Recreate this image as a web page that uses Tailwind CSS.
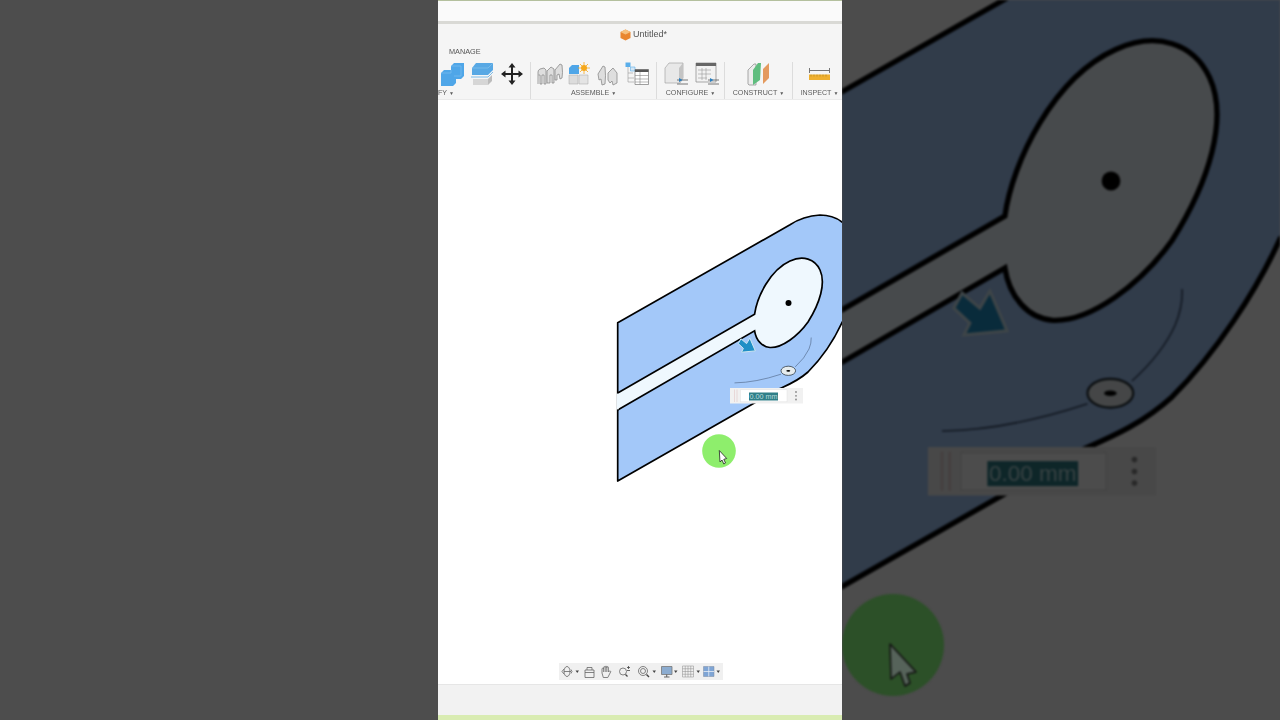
<!DOCTYPE html>
<html lang="en">
<head>
  <meta charset="UTF-8">
  <script src="https://cdn.jsdelivr.net/npm/@tailwindcss/browser@4"></script>
  <title>Untitled</title>
</head>
<body class="w-[1280px] h-[720px] overflow-hidden bg-[#4d4d4d] font-['Liberation_Sans',Arial,sans-serif]">
  <div class="flex h-[720px]">
    <!-- left side of the blurred video frame -->
    <div class="w-[438px] bg-[#4d4d4d]"></div>

    <!-- app window -->
    <div class="w-[404px] flex flex-col bg-white overflow-hidden">
      <div class="h-[1px] bg-[#b4c09e]"></div>
      <div class="h-[20px] bg-[#fafafa]"></div>
      <div class="h-[3px] bg-[#d9d9d5]"></div>

      <!-- toolbar -->
      <div class="h-[76px] bg-[#f5f5f5] border-b border-[#ebebeb] blur-[0.4px]">
        <div class="h-[20px] pt-[2px] pl-[7px] flex items-center justify-center gap-[2px] text-[9px] text-[#555]">
          <svg width="11" height="12" viewBox="0 0 11 12"><path d="M5.5 0.5 10.5 3v6l-5 2.5L0.5 9V3z" fill="#e9862f"/><path d="M5.5 0.5 10.5 3l-5 2.5L0.5 3z" fill="#f6c07e"/></svg>
          <span>Untitled*</span>
        </div>
        <div class="h-[14px] pt-[2px] pl-[11px] flex items-center text-[7.3px] text-[#555]">MANAGE</div>
        <div class="flex h-[37px] mt-[4px] text-[7.1px] text-[#5c5c5c]">
          <!-- modify (cut off) -->
          <div class="w-[93px] border-r border-[#dcdcdc] flex flex-col justify-between">
            <div class="flex items-center h-[24px] gap-[7px] pl-[2px]">
              <svg width="24" height="24" viewBox="0 0 24 24"><path d="M1 11l3-3h7V4l3-3h10v13l-3 3h-5v4l-3 3H1z" fill="#4fa6e8"/><path d="M11 8v3H1M14 14h7V4H11" fill="none" stroke="#85c4f0" stroke-width="0.6"/></svg>
              <svg width="23" height="24" viewBox="0 0 23 24"><path d="M1 6l4-5h17v7l-5 5H1z" fill="#58a8e4"/><path d="M1 6h16l5-5" fill="none" stroke="#8cc6ef" stroke-width="0.6"/><path d="M0 15h17l5-5" fill="none" stroke="#7dbbe8" stroke-width="1"/><path d="M2 17h15v6H2z" fill="#d6d6d6"/><path d="M17 17l4-4v6l-4 4z" fill="#bcbcbc"/></svg>
              <svg width="22" height="22" viewBox="0 0 22 22" fill="#222"><path d="M11 0l3.500 4.500H12V10h5.500V7.500L22 11l-4.500 3.500V12H12v5.500h2.500L11 22l-3.500-4.500H10V12H4.500v2.500L0 11l4.500-3.500V10H10V4.500H7.500z"/></svg>
            </div>
            <div class="h-[12px] pt-[1px] flex items-center">FY<span class="text-[5px] ml-[2px]">&#9660;</span></div>
          </div>
          <!-- assemble -->
          <div class="w-[126px] border-r border-[#dcdcdc] flex flex-col justify-between">
            <div class="flex items-center h-[24px] gap-[4px] pl-[6px]">
              <svg width="27" height="24" viewBox="0 0 27 24" fill="#dedede" stroke="#8a8a8a" stroke-width="0.8"><path d="M1 22V10q0-2 2-3l4-1 2 2v14H7v-9H5v9H3v-9H1.500"/><path d="M10 21V9l4-4 3 2v14h-2v-8h-2v8z"/><path d="M18 18V8l5-6 2 1q1 8 0 13l-2 1-1-5-2 1v5z"/></svg>
              <svg width="22" height="24" viewBox="0 0 22 24" class="mr-[3px]"><path d="M1 6l3-3h7v9H1z" fill="#4fa6e8"/><path d="M1 13h9v9H1z" fill="#dcdcdc" stroke="#a5a5a5" stroke-width="0.5"/><path d="M11 13h9v9h-9z" fill="#e4e4e4" stroke="#a5a5a5" stroke-width="0.5"/><circle cx="16" cy="6" r="3" fill="#f6a81c"/><path d="M16 0v12M10 6h12M12 2l8 8M20 2l-8 8" stroke="#f6a81c" stroke-width="0.8"/></svg>
              <svg width="22" height="24" viewBox="0 0 22 24" class="mr-[2px]" fill="#dedede" stroke="#8a8a8a" stroke-width="0.8"><path d="M1 12l5-8 2 1q1 9 0 17l-3 1-1-6-2 1z"/><path d="M11 11l5-5 4 5v10l-4 2-1-4-2 2-2-3z"/></svg>
              <svg width="24" height="24" viewBox="0 0 24 24"><path d="M0.500 0.500h5v4.500h-5z" fill="#5aaeea"/><path d="M5.500 5h4.500v4H5.500z" fill="#d3e6f5" stroke="#5aaeea" stroke-width="0.6"/><path d="M3 5v15h6M3 11h5M3 16h6" fill="none" stroke="#999" stroke-width="0.6"/><path d="M10 7.500h13.500v15H10z" fill="#fff" stroke="#777" stroke-width="0.7"/><path d="M10 7.500h13.500v2.500H10z" fill="#555"/><path d="M10 13.500h13.500M10 17h13.500M10 20h13.500M15 10v12.500" stroke="#888" stroke-width="0.6"/></svg>
            </div>
            <div class="h-[12px] pt-[1px] flex items-center justify-center">ASSEMBLE<span class="text-[5px] ml-[2px]">&#9660;</span></div>
          </div>
          <!-- configure -->
          <div class="w-[68px] border-r border-[#dcdcdc] flex flex-col justify-between">
            <div class="flex items-center h-[24px] gap-[7px] pl-[7px]">
              <svg width="24" height="24" viewBox="0 0 24 24"><path d="M1 6l4-5h14v15l-3 5H1z" fill="#e8e8e8" stroke="#999" stroke-width="0.6"/><path d="M15 6v15l4-5V1z" fill="#c4c4c4"/><path d="M13 18h11M13 22h11" stroke="#555" stroke-width="0.8"/><path d="M15 16l3.500 2-3.500 2z" fill="#2a7fc0"/></svg>
              <svg width="24" height="24" viewBox="0 0 24 24"><path d="M1 1h20v19H1z" fill="#f2f2f2" stroke="#888" stroke-width="0.7"/><path d="M1 1h20v3H1z" fill="#666"/><path d="M3 8h13M3 12h13M3 16h9M7 6v12M11 6v12" stroke="#999" stroke-width="0.6"/><path d="M13 18h11M13 22h11" stroke="#555" stroke-width="0.8"/><path d="M15 16l3.500 2-3.500 2z" fill="#2a7fc0"/></svg>
            </div>
            <div class="h-[12px] pt-[1px] flex items-center justify-center">CONFIGURE<span class="text-[5px] ml-[2px]">&#9660;</span></div>
          </div>
          <!-- construct -->
          <div class="w-[68px] border-r border-[#dcdcdc] flex flex-col justify-between">
            <div class="flex items-center justify-center h-[24px]">
              <svg width="23" height="24" viewBox="0 0 23 24"><path d="M1 8l6-6h2v21H2l-1-1z" fill="#ececec" stroke="#888" stroke-width="0.7"/><path d="M6 8l5-7 3 0-1 17-7 5z" fill="#5fbd7e"/><path d="M16 7l6-6v15l-6 6z" fill="#e49a5e"/></svg>
            </div>
            <div class="h-[12px] pt-[1px] flex items-center justify-center">CONSTRUCT<span class="text-[5px] ml-[2px]">&#9660;</span></div>
          </div>
          <!-- inspect -->
          <div class="flex-1 pl-[4px] flex flex-col justify-between">
            <div class="flex items-center justify-center h-[24px]">
              <svg width="21" height="12" viewBox="0 0 21 12"><path d="M0.500 0v5M20.500 0v5M1 2.500h19" stroke="#555" stroke-width="0.8"/><path d="M0 6.500h21V12H0z" fill="#efb030"/><path d="M2 6.500v2M5 6.500v2M8 6.500v2M11 6.500v2M14 6.500v2M17 6.500v2" stroke="#97741a" stroke-width="0.5"/></svg>
            </div>
            <div class="h-[12px] pt-[1px] flex items-center justify-center">INSPECT<span class="text-[5px] ml-[2px]">&#9660;</span></div>
          </div>
        </div>
      </div>

      <!-- canvas -->
      <div class="relative flex-1 bg-white">
        <svg class="absolute inset-0" width="404" height="584" viewBox="438 100 404 584">
          <defs>
            <g id="scene">
              <path d="M617.700 322.700 790 224.800Q803 216 820 215Q833 215 842 222L852 230V312L842.500 321.500C835 338 822 358 808 372C798 381 788 385 779.200 388.900L617.700 481Z" fill="#a3c8f9" stroke="#000" stroke-width="1.700" stroke-linejoin="round"/>
              <path d="M617.700 393 754.600 314.200C757 297 770 270 790 261C803 255 815 259 820 270C826 283 820 303 808 322C798 336 782 348 770 347.500C762 347 756 340 754.600 330.800L617.700 410" fill="#eff8fe" stroke="#000" stroke-width="1.700"/>
              <rect x="616.700" y="393.800" width="2" height="15.500" fill="#eff8fe"/>
              <circle cx="788.500" cy="303" r="3" fill="#000"/>
              <path d="M734.500 382.900Q756 382.500 781 374.200M795.200 366.900Q805 358 809 349Q811.500 343 811.200 337.500" fill="none" stroke="#3a4c68" stroke-width="0.500"/>
              <ellipse cx="788.300" cy="370.800" rx="7.300" ry="4.600" fill="#e6ecee" stroke="#1f2a30" stroke-width="0.700"/>
              <ellipse cx="788.300" cy="370.800" rx="2" ry="0.900" fill="#000"/>
              <path d="M740.900 338.800 738.300 343.600 743.400 348.400 741.500 352.200 755.300 350.900 749.800 338.100 746.600 343.600Z" fill="#1f8fc6" stroke="#cfe6f0" stroke-width="1"/>
              <rect x="730" y="388" width="73" height="15.500" fill="#f1f1f1"/>
              <path d="M734.500 389.500v12.500M737 389.500v12.500" stroke="#e6d2d2" stroke-width="0.800"/>
              <rect x="740.500" y="389.800" width="46.500" height="12" fill="#fff" stroke="#e2e2e2" stroke-width="0.500"/>
              <rect x="749" y="392.500" width="29" height="8" fill="#2f7f88"/>
              <text x="763.500" y="399" text-anchor="middle" font-size="7.200" fill="#b9dcdf" font-family="Liberation Sans, Arial, sans-serif">0.00 mm</text>
              <circle cx="796" cy="392" r="0.900" fill="#888"/><circle cx="796" cy="395.800" r="0.900" fill="#888"/><circle cx="796" cy="399.500" r="0.900" fill="#888"/>
            </g>
          </defs>
          <use href="#scene"/>
          <circle cx="719" cy="451" r="16.800" fill="#8eee6c"/>
          <path d="M719.300 450.500 720 462 722 460 723.800 464 725.500 463 723.800 459.300 726.700 458.500Z" fill="#fff" stroke="#222" stroke-width="0.800" stroke-linejoin="round"/>
        </svg>

        <!-- nav bar -->
        <div class="absolute left-[121px] top-[563px] w-[164px] h-[17px] bg-[#f0f0f0] flex items-center pl-[2px] blur-[0.3px]">
          <svg width="160" height="15" viewBox="0 0 160 15" fill="none" stroke="#666" stroke-width="0.800">
            <ellipse cx="6" cy="7.500" rx="3" ry="5"/><path d="M3 7.500h7M3 5 1 7.500 3 10M10 5.500q2 2 0 4"/>
            <path d="M14.500 6.500h3.500l-1.750 2.500z" fill="#444" stroke="none"/>
            <path d="M24 6h9v7.500h-9zM26 6V3.500h5V6M24 8.500h9"/>
            <path d="M41 9V5a.8.8 0 0 1 1.600 0V3.500a.8.8 0 0 1 1.600 0V3a.8.8 0 0 1 1.600 0v.5a.8.8 0 0 1 1.600 0V8l1-1a.8.8 0 0 1 1.200 1l-2.800 5.500h-4.500zM42.600 5v3M44.200 3.500V8M45.800 3v5"/>
            <circle cx="62" cy="7.500" r="3.500"/><path d="M64.500 10.500l2 2" stroke-width="1.200" stroke="#444"/><path d="M66 3.500h3M67.500 2v3M66 6.500h3" stroke="#444"/>
            <circle cx="82" cy="7" r="4.500"/><circle cx="82" cy="7" r="2.500"/><path d="M85.500 10.500l2.500 2.500" stroke-width="1.400" stroke="#444"/>
            <path d="M91.500 6.500H95l-1.750 2.500z" fill="#444" stroke="none"/>
            <path d="M100.500 2.500h10.500v8h-10.500z" fill="#8cacd0" stroke="#777"/><path d="M103 13h5.500M105.700 10.500v2.500" stroke-width="1.100"/>
            <path d="M113 6.500h3.500l-1.750 2.500z" fill="#444" stroke="none"/>
            <path d="M121.500 2h11v11h-11zM124.250 2v11M127 2v11M129.750 2v11M121.500 4.750h11M121.500 7.500h11M121.500 10.250h11" stroke="#8a8a8a" stroke-width="0.500"/>
            <path d="M135.500 6.500H139l-1.750 2.500z" fill="#444" stroke="none"/>
            <path d="M142.500 2.500h10.500v10h-10.500z" fill="#7fa5d5" stroke="#7a8aa0" stroke-width="0.500"/><path d="M147.750 2.500v10M142.500 7.500h10.500" stroke="#e8eef5"/>
            <path d="M155.500 6.500H159l-1.750 2.500z" fill="#444" stroke="none"/>
          </svg>
        </div>
      </div>

      <div class="h-[31px] bg-[#f2f2f2] border-t border-[#e6e6e6]"></div>
      <div class="h-[5px] bg-[#d9ecb2]"></div>
    </div>

    <!-- right side of the video frame: zoomed, dimmed copy -->
    <div class="relative w-[438px] overflow-hidden bg-white">
      <svg class="absolute inset-0 blur-[1px]" width="438" height="720" viewBox="0 0 438 720">
        <g transform="translate(269 181) scale(3.13) translate(-788.5 -303)">
          <use href="#scene"/>
        </g>
      </svg>
      <div class="absolute inset-0 bg-black/70"></div>
      <!-- green cursor marker is darker than the dim layer gives -->
      <svg class="absolute inset-0 blur-[1px]" width="438" height="720" viewBox="0 0 438 720">
        <circle cx="51" cy="645" r="51" fill="#2c5028"/>
        <path d="M48 644 49 679 58 672 63 686 68 683 65 674 74 672Z" fill="#56635a" stroke="#111" stroke-width="1.500" stroke-linejoin="round"/>
      </svg>
    </div>
  </div>
</body>
</html>
